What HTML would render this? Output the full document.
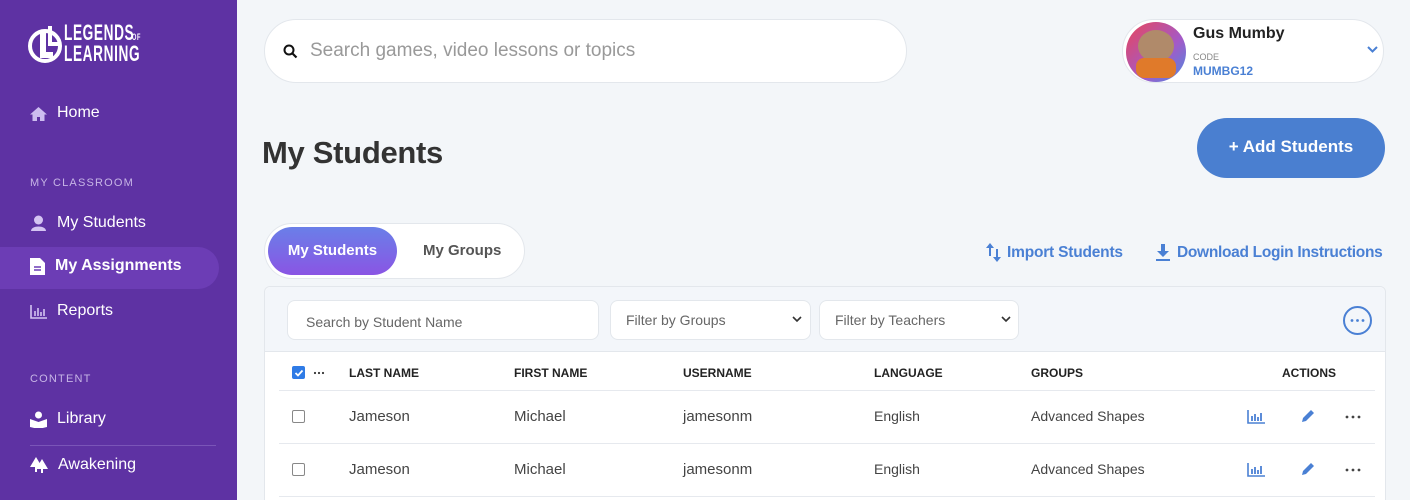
<!DOCTYPE html>
<html><head><meta charset="utf-8"><style>
*{box-sizing:border-box;margin:0;padding:0}
html,body{width:1410px;height:500px;overflow:hidden}
body{background:#f3f6f9;font-family:"Liberation Sans",sans-serif;position:relative}
.sb{position:absolute;left:0;top:0;width:237px;height:500px;background:#5e32a3;color:#fff}
.sb .it{position:absolute;left:30px;font-size:16px;display:flex;align-items:center;gap:10px}
.sb .sec{position:absolute;left:30px;font-size:11px;letter-spacing:1.2px;color:#c7b5e6}
.abs{position:absolute}
.th{position:absolute;top:366px;font-size:12px;font-weight:bold;color:#222}
.td{position:absolute;font-size:15px;color:#444}
.cb{position:absolute;left:292px;width:13px;height:13px;border:1px solid #888;border-radius:2px;background:#fff}
.lg{position:absolute;font-weight:bold;white-space:nowrap;transform:scaleX(0.62);transform-origin:left top;letter-spacing:1px}
</style></head><body>
<div class="sb">
 <svg class="abs" style="left:27px;top:22px" width="40" height="44" viewBox="0 0 40 44"><circle cx="18" cy="24" r="15" fill="none" stroke="#fff" stroke-width="4"/><path d="M13 10v26h13v-6h-7V10z" fill="#fff"/><path d="M23 4v18h9" fill="none" stroke="#fff" stroke-width="4"/></svg>
 <div class="lg" style="left:64px;top:22px;font-size:22px;line-height:22px">LEGENDS</div>
 <div class="lg" style="left:132px;top:33px;font-size:9px;line-height:9px">OF</div>
 <div class="lg" style="left:64px;top:43px;font-size:22px;line-height:22px">LEARNING</div>
 <div class="it" style="top:104px"><svg width="17" height="15"><path d="M8.5 1L0 8.5h2.5V15h4.5v-4h3v4h4.5V8.5H17z" fill="#cdbdf0"/></svg>Home</div>
 <div class="sec" style="top:177px">MY CLASSROOM</div>
 <div class="it" style="top:214px"><svg width="17" height="16"><circle cx="8.5" cy="5" r="4.5" fill="#d4c4f2"/><path d="M1 16c0-6 15-6 15 0z" fill="#d4c4f2"/></svg>My Students</div>
 <div class="abs" style="left:0;top:247px;width:219px;height:42px;background:#6c3db5;border-radius:0 21px 21px 0"></div>
 <div class="it" style="top:257px;font-weight:bold"><svg width="15" height="17"><path d="M0 0h10l5 5v12H0z" fill="#fff"/><path d="M4 9h7M4 12h7" stroke="#6c3db5" stroke-width="1.4"/></svg>My Assignments</div>
 <div class="it" style="top:302px"><svg width="17" height="15"><path d="M1 1v13h16" stroke="#d4c4f2" stroke-width="1.6" fill="none"/><path d="M5 7v5M8 4v8M11 8v4M14 5v7" stroke="#d4c4f2" stroke-width="1.6"/></svg>Reports</div>
 <div class="sec" style="top:373px">CONTENT</div>
 <div class="it" style="top:410px"><svg width="17" height="17"><circle cx="8.5" cy="4" r="3.5" fill="#fff"/><path d="M0 8l8.5 3 8.5-3v8l-8.5 2-8.5-2z" fill="#fff"/></svg>Library</div>
 <div class="abs" style="left:30px;top:445px;width:186px;height:1px;background:#7a55b8"></div>
 <div class="it" style="top:456px"><svg width="18" height="16"><path d="M6 0l6 10H0zM12 2l6 10H6z" fill="#fff"/><rect x="5" y="10" width="2" height="5" fill="#fff"/><rect x="11" y="12" width="2" height="4" fill="#fff"/></svg>Awakening</div>
</div>

<div class="abs" style="left:264px;top:19px;width:643px;height:64px;background:#fff;border:1px solid #e3e7ec;border-radius:32px"></div>
<svg class="abs" style="left:283px;top:44px" width="15" height="15"><circle cx="6" cy="6" r="4.5" fill="none" stroke="#111" stroke-width="2"/><path d="M9.5 9.5l4 4" stroke="#111" stroke-width="2.2"/></svg>
<div class="abs" style="left:310px;top:40px;font-size:19px;color:#999">Search games, video lessons or topics</div>

<div class="abs" style="left:1122px;top:19px;width:262px;height:64px;background:#fff;border:1px solid #e3e7ec;border-radius:32px"></div>
<div class="abs" style="left:1126px;top:22px;width:60px;height:60px;border-radius:50%;background:linear-gradient(135deg,#e9455a,#a35ac8 60%,#4b8ae0)"></div>
<div class="abs" style="left:1138px;top:30px;width:36px;height:32px;border-radius:50%;background:#b08a6a"></div>
<div class="abs" style="left:1136px;top:58px;width:40px;height:20px;border-radius:8px;background:#e07a2a"></div>
<div class="abs" style="left:1193px;top:25px;font-size:16px;font-weight:bold;color:#222">Gus Mumby</div>
<div class="abs" style="left:1193px;top:52px;font-size:9px;color:#888">CODE</div>
<div class="abs" style="left:1193px;top:64px;font-size:12px;font-weight:bold;color:#4a80d4">MUMBG12</div>
<svg class="abs" style="left:1367px;top:46px" width="11" height="8"><path d="M1 1l4.5 4.5L10 1" stroke="#4a80d4" stroke-width="2" fill="none"/></svg>

<div class="abs" style="left:262px;top:135px;font-size:31px;font-weight:bold;color:#333;letter-spacing:-0.3px">My Students</div>
<div class="abs" style="left:1197px;top:118px;width:188px;height:60px;background:#4a7fd0;border-radius:30px;color:#fff;font-size:17px;font-weight:bold;text-align:center;line-height:58px">+ Add Students</div>

<div class="abs" style="left:264px;top:223px;width:261px;height:56px;background:#fff;border:1px solid #e3e7ec;border-radius:28px"></div>
<div class="abs" style="left:268px;top:227px;width:129px;height:48px;border-radius:24px;background:linear-gradient(#6a7fe8,#8a55e4);color:#fff;font-size:15px;font-weight:bold;text-align:center;line-height:48px">My Students</div>
<div class="abs" style="left:423px;top:242px;font-size:15px;font-weight:bold;color:#555">My Groups</div>

<svg class="abs" style="left:985px;top:243px" width="18" height="19"><path d="M5 0l4 5H6v8H4V5H1z" fill="#4a80d4"/><path d="M12 19l4-5h-3V6h-2v8H8z" fill="#4a80d4"/></svg>
<div class="abs" style="left:1007px;top:244px;font-size:15.5px;font-weight:bold;color:#4a80d4;letter-spacing:-0.2px">Import Students</div>
<svg class="abs" style="left:1155px;top:244px" width="16" height="18"><path d="M6 0h4v7h4l-6 6-6-6h4z" fill="#4a80d4"/><rect x="1" y="15" width="14" height="2" fill="#4a80d4"/></svg>
<div class="abs" style="left:1177px;top:244px;font-size:15.5px;font-weight:bold;color:#4a80d4;letter-spacing:-0.3px">Download Login Instructions</div>

<div class="abs" style="left:264px;top:286px;width:1122px;height:230px;background:#fff;border:1px solid #e3e7ec;border-radius:6px"></div>
<div class="abs" style="left:265px;top:287px;width:1120px;height:65px;background:#f3f6fa;border-bottom:1px solid #e3e7ec;border-radius:6px 6px 0 0"></div>
<div class="abs" style="left:287px;top:300px;width:312px;height:40px;background:#fff;border:1px solid #e3e7ec;border-radius:8px;font-size:14px;color:#666;padding:13px 0 0 18px">Search by Student Name</div>
<div class="abs" style="left:610px;top:300px;width:201px;height:40px;background:#fff;border:1px solid #e3e7ec;border-radius:8px;font-size:14px;color:#666;padding:11px 0 0 15px">Filter by Groups</div>
<div class="abs" style="left:819px;top:300px;width:200px;height:40px;background:#fff;border:1px solid #e3e7ec;border-radius:8px;font-size:14px;color:#666;padding:11px 0 0 15px">Filter by Teachers</div>
<svg class="abs" style="left:792px;top:316px" width="10" height="7"><path d="M1 1l4 4 4-4" stroke="#333" stroke-width="1.6" fill="none"/></svg>
<svg class="abs" style="left:1001px;top:316px" width="10" height="7"><path d="M1 1l4 4 4-4" stroke="#333" stroke-width="1.6" fill="none"/></svg>
<div class="abs" style="left:1343px;top:306px;width:29px;height:29px;border:2px solid #4a80d4;border-radius:50%"></div>
<svg class="abs" style="left:1343px;top:306px" width="29" height="29"><circle cx="9" cy="14.5" r="1.4" fill="#4a80d4"/><circle cx="14.5" cy="14.5" r="1.4" fill="#4a80d4"/><circle cx="20" cy="14.5" r="1.4" fill="#4a80d4"/></svg>

<div class="abs" style="left:292px;top:366px;width:13px;height:13px;background:#2f7be6;border-radius:2px"></div>
<svg class="abs" style="left:294px;top:368px" width="10" height="10"><path d="M1.5 5l2.5 2.5 4.5-5" stroke="#fff" stroke-width="1.8" fill="none"/></svg>
<svg class="abs" style="left:313px;top:371px" width="12" height="4"><circle cx="2" cy="2" r="1.1" fill="#333"/><circle cx="6" cy="2" r="1.1" fill="#333"/><circle cx="10" cy="2" r="1.1" fill="#333"/></svg>
<div class="th" style="left:349px">LAST NAME</div>
<div class="th" style="left:514px">FIRST NAME</div>
<div class="th" style="left:683px">USERNAME</div>
<div class="th" style="left:874px">LANGUAGE</div>
<div class="th" style="left:1031px">GROUPS</div>
<div class="th" style="left:1282px">ACTIONS</div>
<div class="abs" style="left:279px;top:390px;width:1096px;height:1px;background:#e6e9ee"></div>
<div class="abs" style="left:279px;top:443px;width:1096px;height:1px;background:#e6e9ee"></div>
<div class="abs" style="left:279px;top:496px;width:1096px;height:1px;background:#e6e9ee"></div>

<div class="cb" style="top:410px"></div>
<div class="td" style="left:349px;top:408px">Jameson</div>
<div class="td" style="left:514px;top:408px">Michael</div>
<div class="td" style="left:683px;top:408px">jamesonm</div>
<div class="td" style="left:874px;top:408px;font-size:14px">English</div>
<div class="td" style="left:1031px;top:408px;font-size:14px">Advanced Shapes</div>

<div class="cb" style="top:463px"></div>
<div class="td" style="left:349px;top:461px">Jameson</div>
<div class="td" style="left:514px;top:461px">Michael</div>
<div class="td" style="left:683px;top:461px">jamesonm</div>
<div class="td" style="left:874px;top:461px;font-size:14px">English</div>
<div class="td" style="left:1031px;top:461px;font-size:14px">Advanced Shapes</div>

<svg class="abs" style="left:1247px;top:409px" width="18" height="15"><path d="M1 1v13h17" stroke="#4a80d4" stroke-width="1.6" fill="none"/><path d="M5 7v5M8 5v7M11 8v4M14 4v8" stroke="#4a80d4" stroke-width="1.8"/></svg>
<svg class="abs" style="left:1300px;top:408px" width="16" height="16"><path d="M2 14l1-4 8-8 3 3-8 8z" fill="#4a80d4"/></svg>
<svg class="abs" style="left:1345px;top:415px" width="16" height="4"><circle cx="2" cy="2" r="1.4" fill="#444"/><circle cx="8" cy="2" r="1.4" fill="#444"/><circle cx="14" cy="2" r="1.4" fill="#444"/></svg>
<svg class="abs" style="left:1247px;top:462px" width="18" height="15"><path d="M1 1v13h17" stroke="#4a80d4" stroke-width="1.6" fill="none"/><path d="M5 7v5M8 5v7M11 8v4M14 4v8" stroke="#4a80d4" stroke-width="1.8"/></svg>
<svg class="abs" style="left:1300px;top:461px" width="16" height="16"><path d="M2 14l1-4 8-8 3 3-8 8z" fill="#4a80d4"/></svg>
<svg class="abs" style="left:1345px;top:468px" width="16" height="4"><circle cx="2" cy="2" r="1.4" fill="#444"/><circle cx="8" cy="2" r="1.4" fill="#444"/><circle cx="14" cy="2" r="1.4" fill="#444"/></svg>
</body></html>
